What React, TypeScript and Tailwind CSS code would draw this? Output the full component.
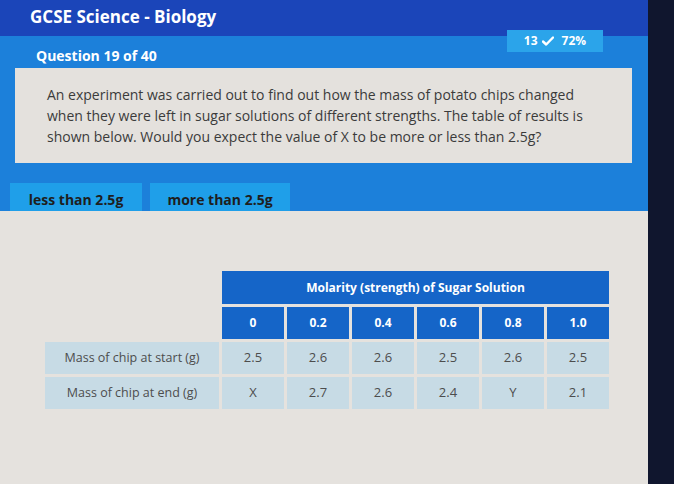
const COLS = ['0', '0.2', '0.4', '0.6', '0.8', '1.0']

const ROWS = [
  { label: 'Mass of chip at start (g)', values: ['2.5', '2.6', '2.6', '2.5', '2.6', '2.5'] },
  { label: 'Mass of chip at end (g)', values: ['X', '2.7', '2.6', '2.4', 'Y', '2.1'] },
]

function ResultsTable() {
  return (
    <div className="grid grid-cols-[174px_repeat(6,62px)] gap-[3px]">
      <div />
      <div className="col-span-6 flex h-[33px] items-center justify-center bg-[#1565c8] text-[12px] font-bold text-white">
        Molarity (strength) of Sugar Solution
      </div>
      <div />
      {COLS.map((c) => (
        <div
          key={c}
          className="flex h-[32px] items-center justify-center bg-[#1565c8] text-[12px] font-bold text-white"
        >
          {c}
        </div>
      ))}
      {ROWS.map((row) => [
        <div
          key={row.label}
          className="flex h-[32px] items-center justify-center bg-[#c7dbe5] text-[12.5px] text-[#4d4d4d]"
        >
          {row.label}
        </div>,
        ...row.values.map((v, i) => (
          <div
            key={row.label + i}
            className="flex h-[32px] items-center justify-center bg-[#c7dbe5] text-[13px] text-[#4d4d4d]"
          >
            {v}
          </div>
        )),
      ])}
    </div>
  )
}

export default function App() {
  return (
    <div
      className="flex h-[484px] w-[674px] overflow-hidden bg-[#10162e]"
      style={{ fontFamily: '"Open Sans", Lato, sans-serif' }}
    >
      <div className="flex w-[648px] flex-col bg-[#1c80da]">
        {/* header */}
        <div className="h-[36px] bg-[#1b45b9] pl-[30px] pt-[4px] text-[17px] font-bold text-white">
          GCSE Science - Biology
        </div>

        {/* question bar */}
        <div className="relative flex h-[30px] items-end pl-[36px] pr-[48px]">
          <span className="text-[14px] font-bold text-white">Question 19 of 40</span>
          <div className="absolute right-[45px] top-[-6px] flex h-[22px] w-[96px] items-center justify-center gap-1 bg-[#2ba4ea] text-[12px] font-bold text-white">
            <span>13</span>
            <svg width="12" height="10" viewBox="0 0 12 10" fill="none">
              <path d="M1 5.5 4.2 8.5 11 1.5" stroke="white" strokeWidth="2.4" strokeLinecap="round" strokeLinejoin="round" />
            </svg>
            <span className="ml-1">72%</span>
          </div>
        </div>

        {/* question text */}
        <div className="ml-[15px] mt-[2px] w-[617px] bg-[#e4e1dd] py-[16px] pl-[32px] pr-[36px] text-[14px] leading-[21px] text-[#3b3b3b]">
          An experiment was carried out to find out how the mass of potato chips changed when they were
          left in sugar solutions of different strengths. The table of results is shown below. Would you
          expect the value of X to be more or less than 2.5g?
        </div>

        {/* answers */}
        <div className="ml-[10px] mt-[20px] flex gap-[8px]">
          <button className="h-[32px] w-[132px] bg-[#1f9fe9] text-[14px] font-bold text-[#1e1e1e]">
            less than 2.5g
          </button>
          <button className="h-[32px] w-[140px] bg-[#1f9fe9] text-[14px] font-bold text-[#1e1e1e]">
            more than 2.5g
          </button>
        </div>

        {/* table panel */}
        <div className="mt-[-4px] flex-1 bg-[#e5e2de] pl-[45px] pt-[60px]">
          <ResultsTable />
        </div>
      </div>
    </div>
  )
}
